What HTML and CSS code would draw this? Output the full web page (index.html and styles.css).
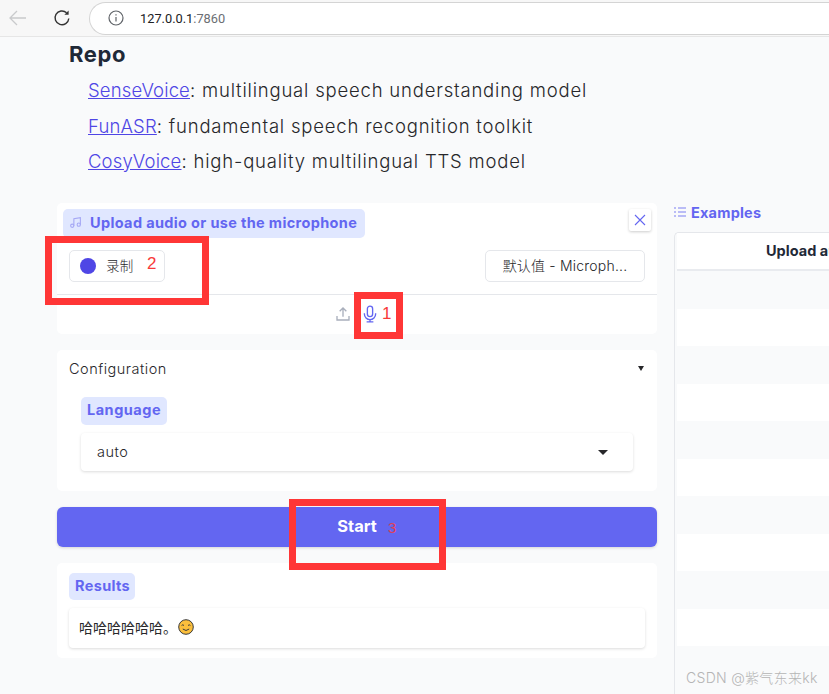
FILE: index.html
```html
<!DOCTYPE html>
<html lang="zh-CN">
<head>
    <meta charset="UTF-8">
    <meta name="viewport" content="width=device-width, initial-scale=1.0">
    <title>SenseVoice</title>
    <link rel="stylesheet" href="styles.css">
</head>
<body>

    <header class="browser-bar">
        <svg class="nav-icon back" width="20" height="20" viewBox="0 0 20 20" fill="none" stroke="#c9cacc" stroke-width="1.3"><path d="M18 10H2M9 3l-7 7 7 7"/></svg>
        <svg class="nav-icon reload" width="18" height="18" viewBox="0 0 18 18" fill="none" stroke="#333" stroke-width="1.4"><path d="M15.8 9.5A6.9 6.9 0 1 1 13.6 3.8"/><path d="M15.6 1.6v4.2h-4.2" fill="#333" stroke="none"/></svg>
        <div class="address">
            <svg width="16" height="16" viewBox="0 0 16 16" fill="none" stroke="#5f6368" stroke-width="1.2"><circle cx="8" cy="8" r="7"/><path d="M8 7v4.5M8 4.2v1.4"/></svg>
            <span class="url">127.0.0.1<span class="port">:7860</span></span>
        </div>
    </header>

    <section class="repo">
        <h2>Repo</h2>
        <p><a href="#">SenseVoice</a>: multilingual speech understanding model</p>
        <p><a href="#">FunASR</a>: fundamental speech recognition toolkit</p>
        <p><a href="#">CosyVoice</a>: high-quality multilingual TTS model</p>
    </section>

    <main class="columns">
        <div class="left-col">
            <div class="card audio-card">
                <div class="audio-top">
                    <span class="pill">
                        <svg width="13" height="13" viewBox="0 0 24 24" fill="none" stroke="#a5a8f5" stroke-width="2"><path d="M9 18V5l12-2v13"/><circle cx="6" cy="18" r="3"/><circle cx="18" cy="16" r="3"/></svg>
                        Upload audio or use the microphone
                    </span>
                    <button class="close-btn">
                        <svg width="12" height="12" viewBox="0 0 12 12" stroke="#6366f1" stroke-width="1.1"><path d="M1 1l10 10M11 1L1 11"/></svg>
                    </button>
                </div>
                <div class="record-row">
                    <button class="outline-btn record"><span class="dot"></span>录制</button>
                    <button class="outline-btn device">默认值 - Microph...</button>
                </div>
                <div class="source-row">
                    <svg width="16" height="16" viewBox="0 0 24 24" fill="none" stroke="#a9afbc" stroke-width="2"><path d="M3 15v6h18v-6M12 16V3M7 8l5-5 5 5"/></svg>
                    <svg width="18" height="20" viewBox="0 0 24 24" fill="none" stroke="#6366f1" stroke-width="1.8"><rect x="8.5" y="1.5" width="7" height="14" rx="3.5"/><path d="M4.5 11v1a7.5 7.5 0 0 0 15 0v-1M12 19.5v3M7.5 22.5h9"/></svg>
                </div>
            </div>

            <div class="card config-card">
                <div class="config-head"><span>Configuration</span><span class="arrow"></span></div>
                <div class="config-body">
                    <span class="pill lang-pill">Language</span>
                    <div class="select-box"><span>auto</span><span class="arrow"></span></div>
                </div>
            </div>

            <button class="start-btn">Start</button>

            <div class="card results-card">
                <span class="pill">Results</span>
                <div class="output">哈哈哈哈哈哈。
                    <svg class="smile" width="16" height="16" viewBox="0 0 16 16"><circle cx="8" cy="8" r="7.3" fill="#fbbf3c" stroke="#3b3b3b" stroke-width="1"/><path d="M3.6 6.5q1.2-1.4 2.4 0M10 6.5q1.2-1.4 2.4 0M4.8 10q3.2 3 6.4 0" fill="none" stroke="#3b3b3b" stroke-width="1"/></svg>
                </div>
            </div>
        </div>

        <div class="right-col">
            <div class="examples-title">
                <svg width="12" height="12" viewBox="0 0 12 12" stroke="#a5a8f5" stroke-width="1.4"><path d="M0 2h2M4 2h8M0 6h2M4 6h8M0 10h2M4 10h8"/></svg>
                Examples
            </div>
            <div class="table">
                <div class="table-head">Upload audio or use the microphone</div>
                <div class="row tall"></div>
                <div class="row alt"></div>
                <div class="row tall"></div>
                <div class="row alt"></div>
                <div class="row tall"></div>
                <div class="row alt"></div>
                <div class="row tall"></div>
                <div class="row alt"></div>
                <div class="row tall"></div>
                <div class="row alt"></div>
                <div class="row tall"></div>
            </div>
        </div>
    </main>

    <!-- marcas vermelhas por cima da tela -->
    <div class="mark mark-record"></div>
    <div class="mark mark-mic"></div>
    <div class="mark mark-start"></div>
    <span class="mark-num num-1">1</span>
    <span class="mark-num num-2">2</span>
    <span class="mark-num num-3">3</span>
    <span class="watermark">CSDN @紫气东来kk</span>

</body>
</html>
```

FILE: styles.css
```css
* {
    box-sizing: border-box;
}

body {
    font-family: 'Inter', 'Noto Sans CJK SC', sans-serif;
    background-color: #f9fafb;
    color: #27272a;
    margin: 0;
    height: 694px;
    overflow: hidden;
    position: relative;
}

button {
    font-family: inherit;
    cursor: pointer;
}

.browser-bar {
    height: 37px;
    background-color: #f7f7f7;
    border-bottom: 1px solid #e6e6e6;
    display: flex;
    align-items: center;
    padding-left: 8px;
}

.nav-icon {
    flex: none;
}

.nav-icon.reload {
    margin-left: 25px;
}

.address {
    flex: none;
    width: 740px;
    height: 33px;
    margin-left: 18px;
    padding-left: 18px;
    background-color: #fff;
    border: 1px solid #d4d4d4;
    border-radius: 17px 0 0 17px;
    border-right: none;
    display: flex;
    align-items: center;
    gap: 16px;
}

.url {
    font-family: 'Roboto', sans-serif;
    font-size: 12.8px;
    color: #202124;
}

.port {
    color: #6b6e73;
}

.repo {
    padding: 5px 0 0 69px;
    height: 166px;
}

.repo h2 {
    font-size: 22px;
    font-weight: 700;
    letter-spacing: 0.6px;
    line-height: 24px;
    margin: 0 0 12px;
    color: #1f2937;
}

.repo p {
    font-size: 18.5px;
    font-weight: 300;
    letter-spacing: 0.8px;
    line-height: 24px;
    margin: 0 0 11.5px 19px;
    color: #27272a;
}

.repo a {
    color: #4f46e5;
    letter-spacing: 0.15px;
}

.columns {
    display: grid;
    grid-template-columns: 600px 300px;
    gap: 17px;
    padding-left: 57px;
}

.left-col {
    display: flex;
    flex-direction: column;
}

.card {
    background-color: #fff;
    border-radius: 5px;
}

.pill {
    display: inline-flex;
    align-items: center;
    gap: 8px;
    background-color: #e0e7ff;
    color: #6366f1;
    font-size: 14.5px;
    font-weight: 700;
    letter-spacing: 0.35px;
    border-radius: 5px;
    height: 28px;
    padding: 0 6px 2px;
}

.audio-card {
    height: 131px;
    margin-bottom: 16px;
}

.audio-top {
    display: flex;
    justify-content: space-between;
    padding: 6px 6px 0;
}

.audio-top .pill {
    height: 29px;
    width: 302px;
    padding-bottom: 3px;
}

.close-btn {
    width: 22px;
    height: 22px;
    padding: 0;
    background-color: #fff;
    border: none;
    border-radius: 2px;
    box-shadow: 0 1px 3px rgba(0, 0, 0, 0.2);
    display: flex;
    align-items: center;
    justify-content: center;
}

.record-row {
    display: flex;
    justify-content: space-between;
    padding: 12px 12px 12px;
    border-bottom: 1px solid #e5e7eb;
}

.outline-btn {
    height: 32px;
    padding-bottom: 3px;
    background-color: #fff;
    border: 1px solid #e5e7eb;
    border-radius: 5px;
    font-size: 14px;
    font-weight: 300;
    letter-spacing: 0.2px;
    color: #27272a;
    display: flex;
    align-items: center;
}

.record {
    width: 96px;
    padding-left: 10px;
    padding-bottom: 2px;
    gap: 10px;
    font-size: 13.5px;
    line-height: 16px;
}

.dot {
    width: 16px;
    height: 16px;
    border-radius: 50%;
    background-color: #4f46e5;
}

.device {
    width: 160px;
    justify-content: center;
}

.source-row {
    display: flex;
    justify-content: center;
    align-items: center;
    gap: 10px;
    padding: 9px 0 0 0;
}

.config-card {
    height: 141px;
    padding: 0 12px;
    margin-bottom: 16px;
}

.config-head {
    height: 37px;
    display: flex;
    justify-content: space-between;
    align-items: center;
    font-size: 14.5px;
    font-weight: 300;
    letter-spacing: 0.5px;
}

.config-head .arrow {
    border-left: 3px solid transparent;
    border-right: 3px solid transparent;
    border-top: 5px solid #27272a;
    margin-right: 1px;
}

.config-body {
    padding: 10px 12px 0;
}

.lang-pill {
    letter-spacing: 0.5px;
    padding-bottom: 3px;
}

.select-box {
    height: 38px;
    margin-top: 8px;
    padding: 0 25px 2px 16px;
    background-color: #fff;
    border-radius: 4px;
    box-shadow: 0 1px 3px rgba(0, 0, 0, 0.14);
    font-size: 14.5px;
    font-weight: 300;
    letter-spacing: 0.5px;
    display: flex;
    justify-content: space-between;
    align-items: center;
}

.select-box .arrow {
    border-left: 5px solid transparent;
    border-right: 5px solid transparent;
    border-top: 5px solid #27272a;
    position: relative;
    top: 1px;
}

.start-btn {
    height: 40px;
    padding-bottom: 3px;
    margin-bottom: 16px;
    background-color: #6366f1;
    color: #fff;
    border: none;
    border-radius: 6px;
    font-size: 16.5px;
    font-weight: 700;
    box-shadow: 0 1px 3px rgba(0, 0, 0, 0.15);
}

.results-card {
    height: 95px;
    padding: 10px 12px 0;
}

.results-card .pill {
    height: 27px;
    display: flex;
    width: 66px;
}

.output {
    height: 40px;
    margin-top: 8px;
    padding: 0 10px 2px;
    background-color: #fff;
    border-radius: 4px;
    box-shadow: 0 1px 3px rgba(0, 0, 0, 0.14);
    font-size: 14px;
    display: flex;
    align-items: center;
}

.smile {
    margin-left: 1px;
}

.examples-title {
    display: flex;
    align-items: center;
    gap: 5px;
    height: 29px;
    padding-bottom: 11px;
    color: #6366f1;
    font-size: 14.5px;
    font-weight: 700;
    letter-spacing: 0.2px;
}

.table {
    border: 1px solid #e5e7eb;
    border-radius: 5px 0 0 5px;
    border-right: none;
    padding-left: 2px;
    height: 470px;
    overflow: hidden;
}

.table-head {
    height: 38px;
    padding-left: 89px;
    background-color: #fff;
    border-bottom: 2px solid #e9ebef;
    font-size: 14.5px;
    font-weight: 700;
    line-height: 36px;
    white-space: nowrap;
    color: #1f2937;
}

.row {
    height: 37.5px;
    background-color: #f9fafb;
}

.row.alt {
    background-color: #fff;
}

.mark {
    position: absolute;
    border: 7px solid #ff3636;
}

.mark-record {
    left: 45px;
    top: 236px;
    width: 164px;
    height: 69px;
}

.mark-mic {
    left: 354px;
    top: 292px;
    width: 49px;
    height: 47px;
}

.mark-start {
    left: 289px;
    top: 499px;
    width: 157px;
    height: 71px;
}

.mark-num {
    position: absolute;
    color: #f83a3a;
    font-family: 'Liberation Sans', sans-serif;
    font-size: 17px;
    line-height: 20px;
}

.num-1 {
    left: 382px;
    top: 304px;
}

.num-2 {
    left: 147px;
    top: 254px;
}

.num-3 {
    left: 388px;
    top: 518px;
    font-size: 15px;
    opacity: 0.85;
}

.watermark {
    position: absolute;
    left: 686px;
    top: 667px;
    font-size: 14px;
    font-weight: 300;
    letter-spacing: 0.3px;
    color: #b5b5b5;
}
```
